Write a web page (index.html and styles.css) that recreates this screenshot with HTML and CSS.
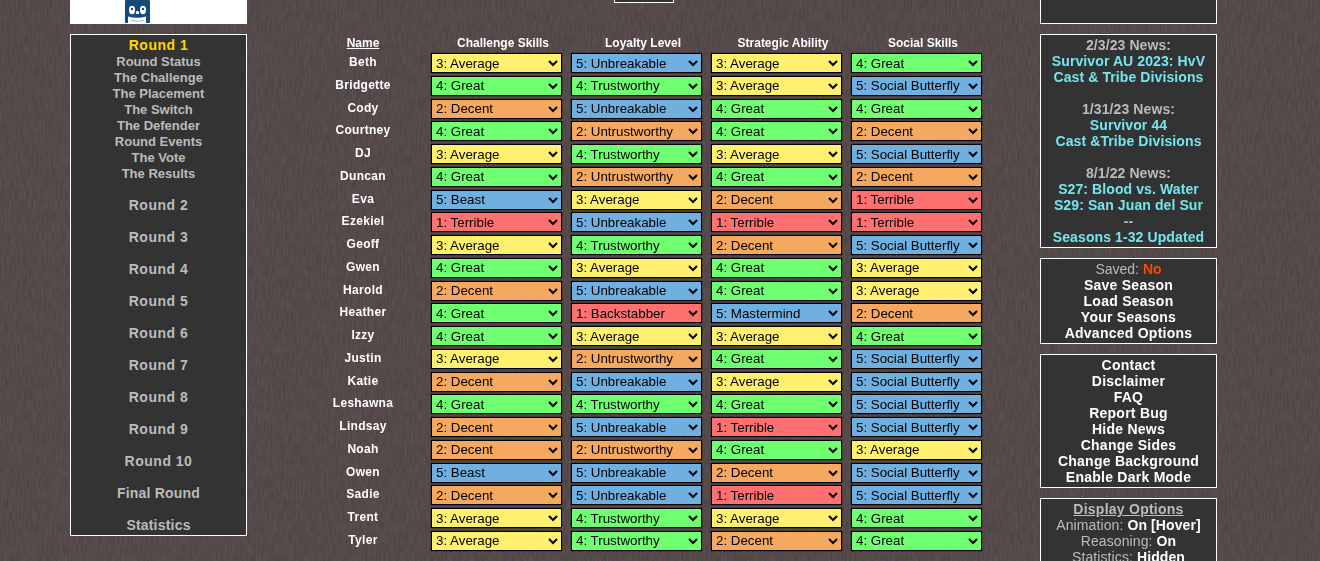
FILE: index.html
```html
<!DOCTYPE html>
<html lang="en">
<head>
  <meta charset="UTF-8" />
  <title>Survivor Season Creator</title>
  <link rel="stylesheet" href="styles.css">
</head>
<body>
  <svg class="grain-defs" width="0" height="0">
    <filter id="grain"><feTurbulence type="fractalNoise" baseFrequency="0.55 0.09" numOctaves="3" seed="4"/><feColorMatrix values="0 0 0 0 0.16  0 0 0 0 0.12  0 0 0 0 0.12  0.5 0.5 0 0 -0.3"/></filter>
  </svg>
  <svg class="grain" aria-hidden="true"><rect width="100%" height="100%" filter="url(#grain)"/></svg>
  <div class="page">
    <!-- left column -->
    <div class="side">
      <div class="logo-box">
        <svg class="logo" viewBox="0 0 25 24" width="25" height="24">
          <rect width="25" height="23" rx="1" fill="#164a7c"/>
          <ellipse cx="7" cy="10" rx="3" ry="4.200" fill="#fff"/>
          <ellipse cx="18" cy="10" rx="3" ry="4.200" fill="#fff"/>
          <circle cx="7" cy="9" r="1.200" fill="#164a7c"/>
          <circle cx="18" cy="9" r="1.200" fill="#164a7c"/>
          <path d="M11.500 11h2l.8 3h-3.600z" fill="#fff"/>
          <path d="M3 16.500q9.500 2.500 18 0v6.500H3z" fill="#fff"/>
          <path d="M6 20q6.500 1.500 13 0v1q-6.500 1-13 0z" fill="#9db4c9"/>
        </svg>
      </div>
      <div class="box menu">
        <div class="current">Round 1</div>
        <div class="sub">Round Status</div>
        <div class="sub">The Challenge</div>
        <div class="sub">The Placement</div>
        <div class="sub">The Switch</div>
        <div class="sub">The Defender</div>
        <div class="sub">Round Events</div>
        <div class="sub">The Vote</div>
        <div class="sub">The Results</div>
        <div class="round">Round 2</div>
        <div class="round">Round 3</div>
        <div class="round">Round 4</div>
        <div class="round">Round 5</div>
        <div class="round">Round 6</div>
        <div class="round">Round 7</div>
        <div class="round">Round 8</div>
        <div class="round">Round 9</div>
        <div class="round">Round 10</div>
        <div class="round tight">Final Round</div>
        <div class="round tight">Statistics</div>
      </div>
    </div>

    <!-- middle -->
    <div class="middle">
      <div class="top-btn"></div>
      <div class="cast" id="cast">
        <div class="head name-head">Name</div>
        <div class="head">Challenge Skills</div>
        <div class="head">Loyalty Level</div>
        <div class="head">Strategic Ability</div>
        <div class="head">Social Skills</div>
      </div>
    </div>

    <!-- right column -->
    <div class="side">
      <div class="box top-box"></div>
      <div class="box news">
        <div>2/3/23 News:</div>
        <div class="link">Survivor AU 2023: HvV</div>
        <div class="link">Cast &amp; Tribe Divisions</div>
        <div class="blank"></div>
        <div>1/31/23 News:</div>
        <div class="link">Survivor 44</div>
        <div class="link">Cast &amp;Tribe Divisions</div>
        <div class="blank"></div>
        <div>8/1/22 News:</div>
        <div class="link">S27: Blood vs. Water</div>
        <div class="link">S29: San Juan del Sur</div>
        <div>--</div>
        <div class="link">Seasons 1-32 Updated</div>
      </div>
      <div class="box plain">
        <div class="saved">Saved: <span class="no">No</span></div>
        <div>Save Season</div>
        <div>Load Season</div>
        <div>Your Seasons</div>
        <div>Advanced Options</div>
      </div>
      <div class="box plain">
        <div>Contact</div>
        <div>Disclaimer</div>
        <div>FAQ</div>
        <div>Report Bug</div>
        <div>Hide News</div>
        <div>Change Sides</div>
        <div>Change Background</div>
        <div>Enable Dark Mode</div>
      </div>
      <div class="box options">
        <div class="opt-title">Display Options</div>
        <div>Animation: <b>On [Hover]</b></div>
        <div>Reasoning: <b>On</b></div>
        <div>Statistics: <b>Hidden</b></div>
      </div>
    </div>
  </div>
  <script src="cast.js"></script>
</body>
</html>
```

FILE: styles.css
```css
html, body {
  margin: 0;
  height: 561px;
  overflow: hidden;
}

body {
  background-color: #4f4445;
  font-family: "Liberation Sans", Arial, sans-serif;
  font-size: 14px;
  font-weight: bold;
  line-height: 16px;
  text-align: center;
  color: #fff;
}

.grain-defs {
  display: block;
}

.grain {
  position: fixed;
  top: 0;
  left: 0;
  width: 100%;
  height: 100%;
}

.page {
  position: relative;
  display: flex;
  padding-left: 70px;
}

.side {
  width: 177px;
  flex: none;
  display: flex;
  flex-direction: column;
  gap: 10px;
}

.logo-box {
  height: 24px;
  background-color: #fff;
  overflow: hidden;
}

.logo {
  display: block;
  margin-left: 55px;
}

.box {
  box-sizing: border-box;
  border: 1px solid #fff;
  background-color: #333;
  padding: 2px 0;
  color: #bbb;
}

/* left menu */
.menu {
  height: 502px;
}

.current {
  color: #ffd700;
  letter-spacing: 0.5px;
}

.sub {
  font-size: 13px;
  line-height: 18px;
  margin-bottom: -2px;
}

.round {
  margin-top: 16px;
  letter-spacing: 0.5px;
}

.round.tight {
  letter-spacing: 0.2px;
}

/* table in the middle */
.middle {
  width: 793px;
  flex: none;
  position: relative;
}

.top-btn {
  box-sizing: border-box;
  width: 60px;
  height: 3px;
  margin-left: 367px;
  border: 1px solid #fff;
  border-top: none;
  background-color: #333;
}

.cast {
  display: grid;
  grid-template-columns: 136px repeat(4, 140px);
  grid-auto-rows: 22.75px;
  margin: 27.45px 0 0 48px;
  font-size: 12px;
  line-height: 20px;
}

.head {
  padding-left: 4px;
  line-height: 27px;
}

.name-head {
  padding-left: 0;
  text-decoration: underline;
}

.cell-name {
  line-height: 19px;
  letter-spacing: 0.3px;
}

.skill {
  display: block;
  box-sizing: border-box;
  width: 131px;
  height: 20px;
  margin: 0;
  padding: 0;
  border: 1px solid #000;
  box-shadow: 0 0 1px #000;
  font-family: "Liberation Sans", Arial, sans-serif;
  font-size: 13.33px;
  color: #000;
}

.lvl-1 { background-color: #ff7070; }
.lvl-2 { background-color: #f4a860; }
.lvl-3 { background-color: #fff070; }
.lvl-4 { background-color: #70ff70; }
.lvl-5 { background-color: #70b0e0; }

/* right column */
.top-box {
  height: 24px;
  border-top: none;
}

.news {
  height: 214px;
  overflow: hidden;
  letter-spacing: 0.1px;
}

.link {
  color: #74e4ee;
}

.blank {
  height: 16px;
}

.plain {
  color: #fff;
  letter-spacing: 0.25px;
}

.plain .saved {
  color: #bbb;
  font-weight: normal;
  letter-spacing: 0;
}

.no {
  color: #ff4500;
  font-weight: bold;
}

.options {
  font-weight: normal;
  letter-spacing: 0.1px;
}

.options b {
  color: #fff;
}

.opt-title {
  font-weight: bold;
  letter-spacing: 0.25px;
  text-decoration: underline;
}
```

FILE: cast.js
```js
// [name, challenge, loyalty, strategic, social]
const players = [
  ["Beth", 3, 5, 3, 4], ["Bridgette", 4, 4, 3, 5], ["Cody", 2, 5, 4, 4],
  ["Courtney", 4, 2, 4, 2], ["DJ", 3, 4, 3, 5], ["Duncan", 4, 2, 4, 2],
  ["Eva", 5, 3, 2, 1], ["Ezekiel", 1, 5, 1, 1], ["Geoff", 3, 4, 2, 5],
  ["Gwen", 4, 3, 4, 3], ["Harold", 2, 5, 4, 3], ["Heather", 4, 1, 5, 2],
  ["Izzy", 4, 3, 3, 4], ["Justin", 3, 2, 4, 5], ["Katie", 2, 5, 3, 5],
  ["Leshawna", 4, 4, 4, 5], ["Lindsay", 2, 5, 1, 5], ["Noah", 2, 2, 4, 3],
  ["Owen", 5, 5, 2, 5], ["Sadie", 2, 5, 1, 5], ["Trent", 3, 4, 3, 4],
  ["Tyler", 3, 4, 2, 4]
];

const labels = [
  ["1: Terrible", "2: Decent", "3: Average", "4: Great", "5: Beast"],
  ["1: Backstabber", "2: Untrustworthy", "3: Average", "4: Trustworthy", "5: Unbreakable"],
  ["1: Terrible", "2: Decent", "3: Average", "4: Great", "5: Mastermind"],
  ["1: Terrible", "2: Decent", "3: Average", "4: Great", "5: Social Butterfly"]
];

const cast = document.getElementById("cast");

players.forEach(function (player) {
  const name = document.createElement("div");
  name.className = "cell-name";
  name.innerText = player[0];
  cast.appendChild(name);

  labels.forEach(function (options, col) {
    const value = player[col + 1];
    const cell = document.createElement("div");
    const select = document.createElement("select");
    select.className = "skill lvl-" + value;
    options.forEach(function (label, i) {
      const option = new Option(label, i + 1, false, i + 1 === value);
      select.appendChild(option);
    });
    cell.appendChild(select);
    cast.appendChild(cell);
  });
});
```
